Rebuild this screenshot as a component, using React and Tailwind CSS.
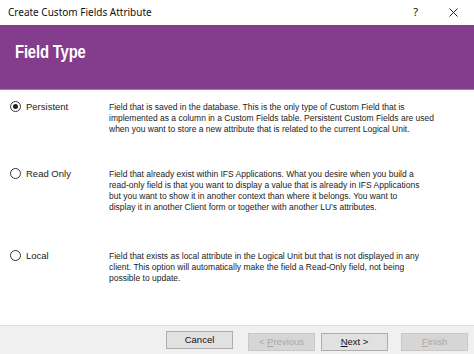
const options = [
  {
    id: "persistent",
    label: "Persistent",
    gap: "mt-0",
    lines: [
      "Field that is saved in the database. This is the only type of Custom Field that is",
      "implemented as a column in a Custom Fields table. Persistent Custom Fields are used",
      "when you want to store a new attribute that is related to the current Logical Unit.",
    ],
  },
  {
    id: "readonly",
    label: "Read Only",
    gap: "mt-[34px]",
    lines: [
      "Field that already exist within IFS Applications. What you desire when you build a",
      "read-only field is that you want to display a value that is already in IFS Applications",
      "but you want to show it in another context than where it belongs. You want to",
      "display it in another Client form or together with another LU’s attributes.",
    ],
  },
  {
    id: "local",
    label: "Local",
    gap: "mt-[38px]",
    lines: [
      "Field that exists as local attribute in the Logical Unit but that is not displayed in any",
      "client. This option will automatically make the field a Read-Only field, not being",
      "possible to update.",
    ],
  },
];

const Radio = ({ checked }) => (
  <span className="w-[11px] h-[11px] rounded-full border border-[#333] bg-white flex items-center justify-center shrink-0">
    {checked && <span className="w-[5px] h-[5px] rounded-full bg-[#222]" />}
  </span>
);

const WizButton = ({ children, disabled }) => (
  <button
    className={`w-[67px] h-[18px] text-[9.5px] border ${
      disabled
        ? "bg-[#d6d6d6] border-[#c8c8c8] text-[#a8a8a8]"
        : "bg-[#e1e1e1] border-[#adadad] text-[#111]"
    }`}
  >
    {children}
  </button>
);

const App = () => {
  const selected = "persistent";

  return (
    <div className="w-[474px] h-[354px] bg-white flex flex-col overflow-hidden font-['Liberation_Sans',Arial,sans-serif] text-[#222]">
      {/* title bar */}
      <div className="h-[25px] flex items-center pl-[8px] pr-[16px] text-[10px] text-[#111] font-['Noto_Sans',sans-serif]">
        <span className="flex-1">Create Custom Fields Attribute</span>
        <span className="mr-[31px] text-[11px]">?</span>
        <svg width="9" height="9" viewBox="0 0 9 9" className="text-[#222]">
          <path d="M0.5 0.5L8.5 8.5M8.5 0.5L0.5 8.5" stroke="currentColor" strokeWidth="1" />
        </svg>
      </div>

      {/* header band */}
      <div className="h-[65px] bg-[#843d8c] border-b border-[#a97aae] flex items-center pl-[15px] pb-[10px]">
        <h1 className="text-white text-[19px] font-bold tracking-[-0.2px] scale-x-[0.78] origin-left font-['Liberation_Sans',Arial,sans-serif]">
          Field Type
        </h1>
      </div>

      {/* options */}
      <div className="flex-1 pt-[12px] flex flex-col">
        {options.map((o) => (
          <div key={o.id} className={`flex items-start ${o.gap}`}>
            <div className="w-[109px] shrink-0 pl-[10px] flex items-center gap-[5px] h-[11px] mt-[-1px]">
              <Radio checked={selected === o.id} />
              <span className="text-[9.5px] leading-none">{o.label}</span>
            </div>
            <div className="flex flex-col text-[8.5px] leading-[11px] text-[#222]">
              {o.lines.map((l, i) => (
                <span key={i} className="whitespace-nowrap">
                  {l}
                </span>
              ))}
            </div>
          </div>
        ))}
      </div>

      {/* footer */}
      <div className="h-[29px] bg-[#f0f0f0] border-t border-[#dfdfdf] flex items-center justify-end pr-[6px]">
        <WizButton>Cancel</WizButton>
        <div className="ml-[15px]">
          <WizButton disabled>
            &lt; <span className="underline">P</span>revious
          </WizButton>
        </div>
        <div className="ml-[6px]">
          <WizButton>
            <span className="underline">N</span>ext &gt;
          </WizButton>
        </div>
        <div className="ml-[13px]">
          <WizButton disabled>
            <span className="underline">F</span>inish
          </WizButton>
        </div>
      </div>
    </div>
  );
};

export default App;
